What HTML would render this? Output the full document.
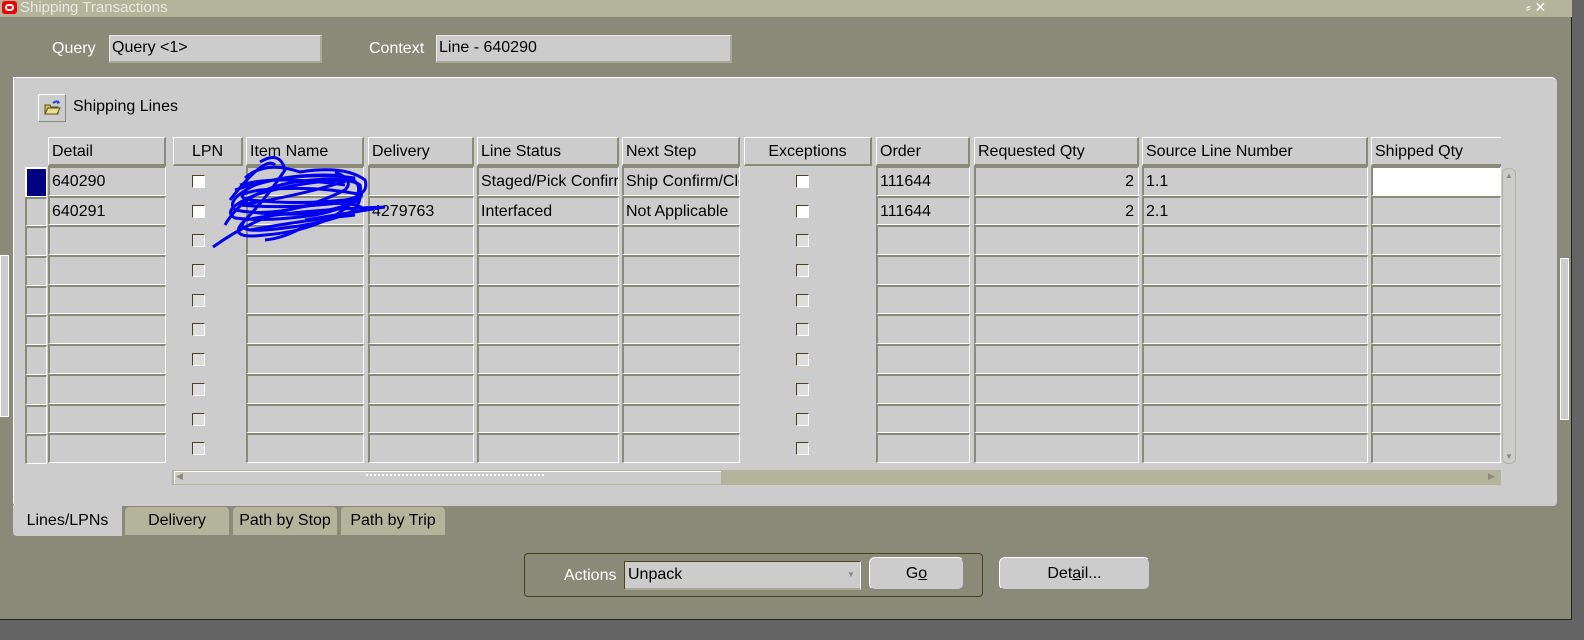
<!DOCTYPE html>
<html><head><meta charset="utf-8"><style>
*{box-sizing:border-box;margin:0;padding:0}
body{width:1584px;height:640px;background:#646464;position:relative;overflow:hidden;font-family:"Liberation Sans",Arial,sans-serif;font-size:16px;color:#000}
.a{position:absolute}
#win{left:0;top:0;width:1572px;height:620px;background:#8a8a78;border-bottom:1px solid #222;border-right:1px solid #222}
#title{left:0;top:0;width:1572px;height:17px;background:#b4b49c;color:#e8e8dc;font-size:15px;line-height:16px;padding-left:20px}
.fld{background:#cccccc;border-top:1px solid #e8e8e0;border-left:1px solid #e8e8e0;border-bottom:2px solid #a8a898;border-right:2px solid #a8a898;padding-left:2px;line-height:24px}
.lbl{color:#fff;font-size:16px}
#panel{left:13px;top:77px;width:1544px;height:429px;background:#cccccc;border-radius:0 6px 4px 4px;border-top:1px solid #fff;border-left:1px solid #fff}
.col{position:absolute;top:137px}
.h{height:29px;border-top:1px solid #fff;border-left:1px solid #fff;border-bottom:2px solid #8a8a78;border-right:2px solid #8a8a78;padding-left:3px;line-height:28px;white-space:nowrap;overflow:hidden}
.c{height:29.7px;border-top:2px solid #8a8a78;border-left:2px solid #8a8a78;border-bottom:1px solid #fff;border-right:1px solid #fff;padding-left:2px;line-height:27px;white-space:nowrap;overflow:hidden}
.ck{height:29.7px;position:relative}
.ck::after{content:"";position:absolute;left:19px;top:9px;width:11px;height:11px;border-top:1px solid #4a4020;border-left:1px solid #4a4020;background:#ddd;border-right:1px solid #fff;border-bottom:1px solid #fff}
.ck.w::after{background:#fff}
.ce{text-align:center;padding:0}
.r{text-align:right;padding-right:4px}
.tab{top:507px;height:28px;background:#b4b49c;border-radius:4px 4px 0 0;text-align:center;line-height:28px;font-size:16px}
.btn{background:#cccccc;border-radius:6px;border-top:1px solid #fff;border-left:1px solid #fff;border-bottom:1px solid #888;border-right:1px solid #888;text-align:center;line-height:31px}
</style></head><body>
<div id="win" class="a">
<div id="title" class="a">Shipping Transactions</div>
<div class="a" style="left:2px;top:1px;width:15px;height:13px;background:#e00;border-radius:3px"><div class="a" style="left:3px;top:3px;width:9px;height:7px;border:2px solid #fff;border-radius:4px"></div></div>
<div class="a" style="left:1526px;top:0;color:#fff;font-size:14px;line-height:14px">⸗ ✕</div>
<div class="a lbl" style="left:52px;top:40px">Query</div>
<div class="a fld" style="left:109px;top:35px;width:213px;height:28px">Query &lt;1&gt;</div>
<div class="a lbl" style="left:369px;top:40px">Context</div>
<div class="a fld" style="left:436px;top:35px;width:296px;height:28px">Line - 640290</div>
<div class="a" style="left:0;top:255px;width:9px;height:162px;background:#cccccc;border:1px solid #fff"></div>
<div class="a" style="left:1560px;top:258px;width:9px;height:162px;background:#cccccc;border:1px solid #fff"></div>
</div>
<div id="panel" class="a"></div>
<div class="a" style="left:38px;top:94px;width:28px;height:28px;background:#cccccc;border-top:1px solid #fff;border-left:1px solid #fff;border-bottom:1px solid #888;border-right:1px solid #888">
<svg width="26" height="26" viewBox="0 0 26 26"><path d="M6 10h5l1 2h7v7H6z" fill="#c8c060" stroke="#5a5020"/><path d="M6 19l3-6h12l-3 6z" fill="#e8e090" stroke="#5a5020"/><path d="M14 8q4-3 6 0" stroke="#2040e0" fill="none" stroke-width="2"/><path d="M19 5l2 3-3 1z" fill="#2040e0"/></svg></div>
<div class="a" style="left:73px;top:98px">Shipping Lines</div>

<div class="col" style="left:25px;width:22px;top:167px">
<div class="c" style="background:#000080;border-color:#fff"></div><div class="c"></div><div class="c"></div><div class="c"></div><div class="c"></div><div class="c"></div><div class="c"></div><div class="c"></div><div class="c"></div><div class="c"></div></div>

<div class="col" style="left:48px;width:118px"><div class="h">Detail</div><div class="c">640290</div><div class="c">640291</div><div class="c"></div><div class="c"></div><div class="c"></div><div class="c"></div><div class="c"></div><div class="c"></div><div class="c"></div><div class="c"></div></div>
<div class="col" style="left:173px;width:70px"><div class="h ce">LPN</div><div class="ck w"></div><div class="ck w"></div><div class="ck"></div><div class="ck"></div><div class="ck"></div><div class="ck"></div><div class="ck"></div><div class="ck"></div><div class="ck"></div><div class="ck"></div></div>
<div class="col" style="left:246px;width:118px"><div class="h">Item Name</div><div class="c"></div><div class="c"></div><div class="c"></div><div class="c"></div><div class="c"></div><div class="c"></div><div class="c"></div><div class="c"></div><div class="c"></div><div class="c"></div></div>
<div class="col" style="left:368px;width:106px"><div class="h">Delivery</div><div class="c"></div><div class="c">4279763</div><div class="c"></div><div class="c"></div><div class="c"></div><div class="c"></div><div class="c"></div><div class="c"></div><div class="c"></div><div class="c"></div></div>
<div class="col" style="left:477px;width:142px"><div class="h">Line Status</div><div class="c">Staged/Pick Confirmed</div><div class="c">Interfaced</div><div class="c"></div><div class="c"></div><div class="c"></div><div class="c"></div><div class="c"></div><div class="c"></div><div class="c"></div><div class="c"></div></div>
<div class="col" style="left:622px;width:118px"><div class="h">Next Step</div><div class="c">Ship Confirm/Close</div><div class="c">Not Applicable</div><div class="c"></div><div class="c"></div><div class="c"></div><div class="c"></div><div class="c"></div><div class="c"></div><div class="c"></div><div class="c"></div></div>
<div class="col" style="left:744px;width:128px"><div class="h ce">Exceptions</div><div class="ck w" style="margin-left:33px"></div><div class="ck w" style="margin-left:33px"></div><div class="ck" style="margin-left:33px"></div><div class="ck" style="margin-left:33px"></div><div class="ck" style="margin-left:33px"></div><div class="ck" style="margin-left:33px"></div><div class="ck" style="margin-left:33px"></div><div class="ck" style="margin-left:33px"></div><div class="ck" style="margin-left:33px"></div><div class="ck" style="margin-left:33px"></div></div>
<div class="col" style="left:876px;width:94px"><div class="h">Order</div><div class="c">111644</div><div class="c">111644</div><div class="c"></div><div class="c"></div><div class="c"></div><div class="c"></div><div class="c"></div><div class="c"></div><div class="c"></div><div class="c"></div></div>
<div class="col" style="left:974px;width:165px"><div class="h">Requested Qty</div><div class="c r">2</div><div class="c r">2</div><div class="c"></div><div class="c"></div><div class="c"></div><div class="c"></div><div class="c"></div><div class="c"></div><div class="c"></div><div class="c"></div></div>
<div class="col" style="left:1142px;width:226px"><div class="h">Source Line Number</div><div class="c">1.1</div><div class="c">2.1</div><div class="c"></div><div class="c"></div><div class="c"></div><div class="c"></div><div class="c"></div><div class="c"></div><div class="c"></div><div class="c"></div></div>
<div class="col" style="left:1371px;width:130px"><div class="h" style="border-right:none">Shipped Qty</div><div class="c" style="background:#fff"></div><div class="c"></div><div class="c"></div><div class="c"></div><div class="c"></div><div class="c"></div><div class="c"></div><div class="c"></div><div class="c"></div><div class="c"></div></div>

<div class="a" style="left:1502px;top:168px;width:14px;height:296px;border:1px solid #b4b49c;border-radius:6px;background:#cccccc"></div>
<div class="a" style="left:1505px;top:171px;font-size:8px;color:#8a8a78">▲</div>
<div class="a" style="left:1505px;top:452px;font-size:8px;color:#8a8a78">▼</div>
<div class="a" style="left:172px;top:470px;width:1329px;height:15px;background:#b4b49c;border:1px solid #b4b49c"></div>
<div class="a" style="left:174px;top:471px;width:547px;height:13px;background:#cccccc;border-top:1px solid #fff;border-left:1px solid #fff"></div>
<div class="a" style="left:366px;top:474px;width:178px;height:6px;border-top:2px dotted #fff"></div>
<div class="a" style="left:176px;top:471px;font-size:9px;color:#8a8a78">◀</div>
<div class="a" style="left:1488px;top:471px;font-size:9px;color:#8a8a78">▶</div>

<svg class="a" style="left:205px;top:150px" width="190" height="100" viewBox="0 0 190 100"><g fill="none" stroke="#0000ee" stroke-width="3">
<path d="M8 97 Q60 60 110 55 Q150 50 160 60 M55 12 Q75 0 80 20 Q60 50 40 70 Q20 90 60 85 Q120 80 150 50 Q165 25 120 25 Q80 25 50 35 Q20 50 30 60 Q80 70 140 40 Q150 30 130 22"/>
<path d="M20 75 Q40 40 90 32 Q140 25 155 35 Q160 55 110 65 Q60 72 30 68 Q15 60 50 45 Q100 30 148 30 Q162 40 150 60 Q120 75 60 80 Q30 82 40 70 Q90 60 180 57 Q150 62 100 70"/>
<path d="M40 28 Q60 10 95 22 Q140 15 160 30 Q165 45 140 50 Q90 55 45 50 Q25 45 55 40 Q110 35 158 45 M60 90 Q80 88 100 76 M25 50 Q60 5 70 15"/>
<path d="M30 40 Q90 20 150 28 Q100 45 35 55 Q90 60 155 50 Q110 70 45 62 M45 80 Q100 70 150 65 M35 35 Q70 25 140 35"/>
</g></svg>

<div class="a" style="left:13px;top:505px;width:109px;height:31px;background:#cccccc;border-radius:0 0 0 4px;line-height:31px;text-align:center">Lines/LPNs</div>
<div class="a tab" style="left:125px;width:104px">Delivery</div>
<div class="a tab" style="left:233px;width:104px">Path by Stop</div>
<div class="a tab" style="left:341px;width:104px">Path by Trip</div>

<div class="a" style="left:524px;top:553px;width:459px;height:44px;border:1px solid #4a4020;border-radius:4px"></div>
<div class="a lbl" style="left:564px;top:567px">Actions</div>
<div class="a" style="left:624px;top:561px;width:237px;height:29px;background:#cccccc;border-top:1px solid #4a4020;border-left:1px solid #4a4020;border-bottom:2px solid #a8a898;border-right:1px solid #fff;line-height:26px;padding-left:3px">Unpack<span class="a" style="left:222px;top:0;font-size:8px;color:#888">▼</span></div>
<div class="a btn" style="left:869px;top:557px;width:95px;height:33px">G<u>o</u></div>
<div class="a btn" style="left:999px;top:557px;width:151px;height:33px">Det<u>a</u>il...</div>
</body></html>
